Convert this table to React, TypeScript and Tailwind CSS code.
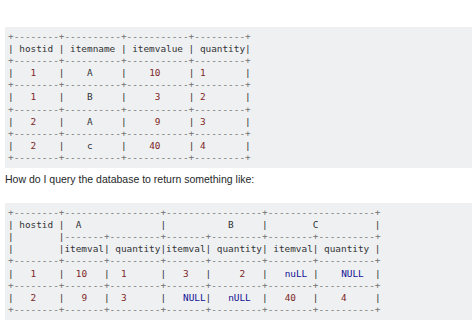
const FIRST = [
  "+--------+----------+-----------+---------+",
  "| hostid | itemname | itemvalue | quantity|",
  "+--------+----------+-----------+---------+",
  "|   1    |    A     |    10     | 1       |",
  "+--------+----------+-----------+---------+",
  "|   1    |    B     |     3     | 2       |",
  "+--------+----------+-----------+---------+",
  "|   2    |    A     |     9     | 3       |",
  "+--------+----------+-----------+---------+",
  "|   2    |    c     |    40     | 4       |",
  "+--------+----------+-----------+---------+",
];

const WANTED = [
  "+--------+-----------------+-----------------+-------------------+",
  "| hostid |  A              |           B     |        C          |",
  "|        |-------+---------+-------+---------+--------+----------+",
  "|        |itemval| quantity|itemval| quantity| itemval| quantity |",
  "+--------+-------+---------+-------+---------+--------+----------+",
  "|   1    |  10   |  1      |   3   |     2   |   nuLL |    NULL  |",
  "+--------+-------+---------+-------+---------+--------+----------+",
  "|   2    |   9   |  3      |   NULL|   nULL  |   40   |    4     |",
  "+--------+-------+---------+-------+---------+--------+----------+",
];

// crude prettify: numbers = literal, null = keyword, rules = faint punctuation
function Line({ text }: { text: string }) {
  const parts = text.split(/(\d+|[nN][uU][lL][lL]|[-+]+)/);
  return (
    <div className="h-[12.1px] whitespace-pre">
      {parts.map((p, i) => {
        if (/^\d+$/.test(p)) return <span key={i} className="text-[#7d2727]">{p}</span>;
        if (/^null$/i.test(p)) return <span key={i} className="text-[#101094]">{p}</span>;
        if (/^[-+]+$/.test(p)) return <span key={i} className="text-[#707070]">{p}</span>;
        return <span key={i}>{p}</span>;
      })}
    </div>
  );
}

function Code({ lines }: { lines: string[] }) {
  return (
    <pre className="bg-[#eff0f1] py-[4px] pl-[3px] font-['DejaVu_Sans_Mono',monospace] text-[9.4px] leading-[12.1px] text-[#303336]">
      {lines.map((l, i) => (
        <Line key={i} text={l} />
      ))}
    </pre>
  );
}

export default function App() {
  return (
    <div className="h-[333px] w-[474px] overflow-hidden bg-white pl-[5px] pr-[2px] pt-[27px]">
      <Code lines={FIRST} />
      <p className="mt-[4px] mb-[16px] font-['Liberation_Sans',Arial,sans-serif] text-[10.5px] leading-[15px] text-[#242729]">
        How do I query the database to return something like:
      </p>
      <Code lines={WANTED} />
    </div>
  );
}
